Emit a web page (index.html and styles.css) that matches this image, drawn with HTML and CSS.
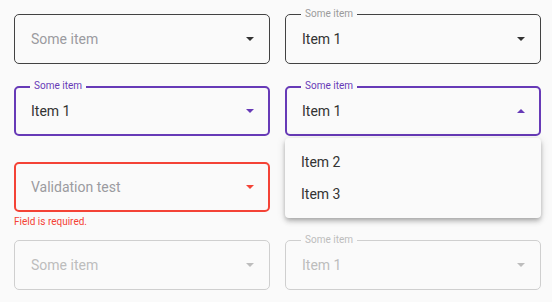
FILE: index.html
```html
<!DOCTYPE html>
<html>
<head>
<meta charset="utf-8">
<link rel="stylesheet" href="styles.css">
</head>
<body>
<div class="page">
  <div class="row row-1">
    <div class="field">
      <span class="placeholder">Some item</span>
      <svg class="arrow" width="8" height="4" viewBox="0 0 8 4"><polygon points="0,0 8,0 4,4"/></svg>
    </div>
    <div class="field">
      <span class="label">Some item</span>
      <span class="value">Item 1</span>
      <svg class="arrow" width="8" height="4" viewBox="0 0 8 4"><polygon points="0,0 8,0 4,4"/></svg>
    </div>
  </div>
  <div class="row row-2">
    <div class="field focused">
      <span class="label">Some item</span>
      <span class="value">Item 1</span>
      <svg class="arrow" width="8" height="4" viewBox="0 0 8 4"><polygon points="0,0 8,0 4,4"/></svg>
    </div>
    <div class="field focused">
      <span class="label">Some item</span>
      <span class="value">Item 1</span>
      <svg class="arrow" width="8" height="4" viewBox="0 0 8 4"><polygon points="0,4 8,4 4,0"/></svg>
      <div class="menu">
        <div class="menu-item">Item 2</div>
        <div class="menu-item">Item 3</div>
      </div>
    </div>
  </div>
  <div class="row row-3">
    <div class="cell">
      <div class="field invalid">
        <span class="placeholder">Validation test</span>
        <svg class="arrow" width="8" height="4" viewBox="0 0 8 4"><polygon points="0,0 8,0 4,4"/></svg>
      </div>
      <div class="hint">Field is required.</div>
    </div>
    <div class="cell"></div>
  </div>
  <div class="row row-4">
    <div class="field disabled">
      <span class="placeholder">Some item</span>
      <svg class="arrow" width="8" height="4" viewBox="0 0 8 4"><polygon points="0,0 8,0 4,4"/></svg>
    </div>
    <div class="field disabled">
      <span class="label">Some item</span>
      <span class="value">Item 1</span>
      <svg class="arrow" width="8" height="4" viewBox="0 0 8 4"><polygon points="0,0 8,0 4,4"/></svg>
    </div>
  </div>
</div>
</body>
</html>
```
FILE: styles.css
```css
html, body {
  margin: 0;
  padding: 0;
  background: #fafafa;
}
body {
  font-family: Roboto, "Liberation Sans", sans-serif;
  width: 552px;
  height: 302px;
  overflow: hidden;
}
.page {
  padding: 14px 0 0 14px;
}
.row {
  display: flex;
  gap: 15px;
}
.row-1 { margin-bottom: 22px; }
.row-2 { margin-bottom: 26px; }
.row-3 { margin-bottom: 12px; }
.cell {
  width: 256px;
}
.field {
  position: relative;
  box-sizing: border-box;
  width: 256px;
  height: 50px;
  border: 1px solid #424242;
  border-radius: 5px;
  display: flex;
  align-items: center;
  padding: 0 15px 0 16px;
}
.placeholder, .value {
  flex: 1;
  font-size: 14px;
}
.placeholder { color: #9b9ba0; }
.value { color: #333333; }
.arrow {
  fill: #333333;
  display: block;
}
.label {
  position: absolute;
  left: 15px;
  top: -7px;
  padding: 0 4px;
  background: #fafafa;
  font-size: 10px;
  line-height: 12px;
  color: #9b9b9b;
}
.focused {
  border: 2px solid #673ab7;
  padding: 0 14px 0 15px;
}
.focused .label {
  color: #673ab7;
  left: 14px;
  top: -8px;
}
.focused .arrow { fill: #673ab7; }
.invalid {
  border: 2px solid #f44336;
  padding: 0 14px 0 15px;
}
.invalid .arrow { fill: #f44336; }
.hint {
  margin-top: 3px;
  font-size: 10px;
  line-height: 13px;
  color: #f44336;
}
.disabled {
  border-color: #cfcfcf;
}
.disabled .placeholder, .disabled .value { color: #bdbdbd; }
.disabled .label { color: #bdbdbd; }
.disabled .arrow { fill: #bdbdbd; }
.menu {
  position: absolute;
  left: -2px;
  right: -2px;
  top: calc(100% + 4px);
  background: #fafafa;
  border-radius: 4px;
  padding: 8px 0;
  box-shadow: 0 2px 4px -1px rgba(0,0,0,0.2), 0 4px 5px 0 rgba(0,0,0,0.14), 0 1px 10px 0 rgba(0,0,0,0.12);
  z-index: 2;
}
.menu-item {
  height: 32px;
  display: flex;
  align-items: center;
  padding: 0 16px;
  font-size: 14px;
  color: #333333;
}
```
